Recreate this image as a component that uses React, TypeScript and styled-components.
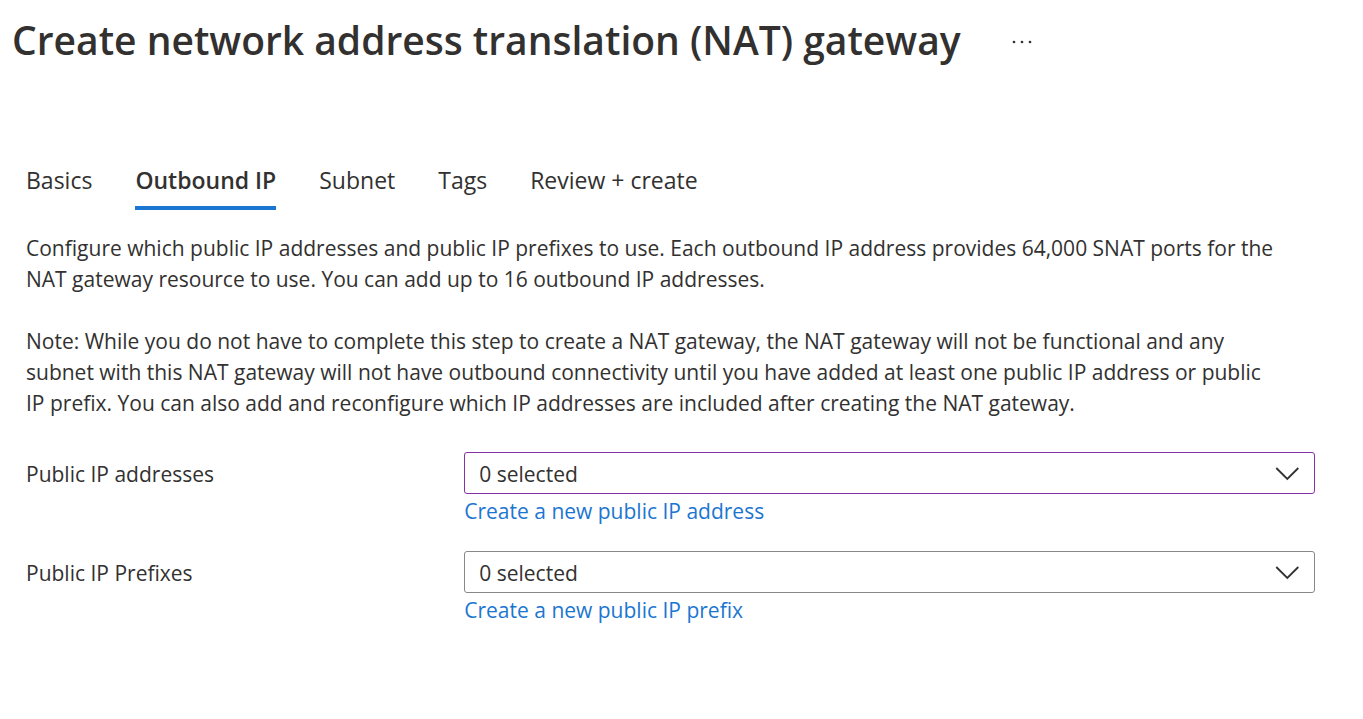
import React, { useState } from "react";
import styled, { createGlobalStyle } from "styled-components";

const GlobalStyle = createGlobalStyle`
  * {
    box-sizing: border-box;
  }
  body {
    margin: 0;
    background: #ffffff;
    color: #323130;
    font-family: "Segoe UI", "Open Sans", "Noto Sans", sans-serif;
    font-size: 21px;
    line-height: 31px;
  }
`;

const Page = styled.main`
  display: flex;
  flex-direction: column;
`;

const Header = styled.header`
  display: flex;
  align-items: center;
  gap: 46px;
  padding: 12px;
`;

const Title = styled.h1`
  margin: 0;
  font-size: 39px;
  line-height: 56px;
  font-weight: 600;
`;

const MoreButton = styled.button`
  display: flex;
  padding: 8px 4px 4px;
  border: 0;
  background: none;
  color: inherit;
  cursor: pointer;
`;

const Content = styled.div`
  display: flex;
  flex-direction: column;
  padding: 80px 48px 48px 26px;
`;

const TabList = styled.div`
  display: flex;
  flex-wrap: wrap;
  gap: 43px;
`;

const Tab = styled.button<{ $active: boolean }>`
  padding: 5px 0 10px;
  border: 0;
  border-bottom: 4px solid ${(p) => (p.$active ? "#1b76d1" : "transparent")};
  background: none;
  color: inherit;
  font: inherit;
  font-size: 23px;
  font-weight: ${(p) => (p.$active ? 600 : 400)};
  cursor: pointer;
`;

const Description = styled.p`
  margin: 0 0 31px;
  padding-right: 36px;
`;

const Panel = styled.section`
  padding-top: 23px;
`;

const Form = styled.form`
  display: flex;
  flex-direction: column;
  gap: 24px;
  padding-top: 2px;
`;

const Field = styled.div`
  display: grid;
  grid-template-columns: 34% 1fr;
`;

const Label = styled.label`
  padding-top: 7px;
`;

const Control = styled.div`
  display: flex;
  flex-direction: column;
  align-items: flex-start;
`;

const SelectBox = styled.div<{ $highlighted: boolean }>`
  display: grid;
  align-items: center;
  width: 100%;
  height: 42px;
  border: 1px solid ${(p) => (p.$highlighted ? "#8632a6" : "#8a8886")};
  border-radius: 3px;

  & > * {
    grid-area: 1 / 1;
  }
  & > svg {
    justify-self: end;
    margin-right: 14px;
    pointer-events: none;
  }
`;

const Select = styled.select`
  appearance: none;
  width: 100%;
  height: 40px;
  padding: 2px 48px 0 14px;
  border: 0;
  background: none;
  color: inherit;
  font: inherit;
  cursor: pointer;
`;

const CreateLink = styled.a`
  padding-top: 2px;
  color: #1b76d1;
  text-decoration: none;
`;

const Chevron = () => (
  <svg width="26" height="16" viewBox="0 0 26 16" fill="none" stroke="#323130" strokeWidth="1.8" aria-hidden="true">
    <path d="M2.3 3 13.3 14 24.3 3" />
  </svg>
);

const tabs = ["Basics", "Outbound IP", "Subnet", "Tags", "Review + create"];

const fields = [
  { id: "addresses", label: "Public IP addresses", link: "Create a new public IP address", highlighted: true },
  { id: "prefixes", label: "Public IP Prefixes", link: "Create a new public IP prefix", highlighted: false },
];

export default function App() {
  const [active, setActive] = useState("Outbound IP");
  return (
    <Page>
      <GlobalStyle />
      <Header>
        <Title>Create network address translation (NAT) gateway</Title>
        <MoreButton type="button" aria-label="More options">
          <svg width="22" height="6" viewBox="0 0 22 6" fill="currentColor" aria-hidden="true">
            <circle cx="3" cy="3" r="1.3" />
            <circle cx="11" cy="3" r="1.3" />
            <circle cx="19" cy="3" r="1.3" />
          </svg>
        </MoreButton>
      </Header>
      <Content>
        <TabList role="tablist">
          {tabs.map((tab) => (
            <Tab
              key={tab}
              type="button"
              role="tab"
              aria-selected={tab === active}
              $active={tab === active}
              onClick={() => setActive(tab)}
            >
              {tab}
            </Tab>
          ))}
        </TabList>
        <Panel role="tabpanel">
          <Description>
            Configure which public IP addresses and public IP prefixes to use. Each outbound IP address provides
            64,000 SNAT ports for the NAT gateway resource to use. You can add up to 16 outbound IP addresses.
          </Description>
          <Description>
            Note: While you do not have to complete this step to create a NAT gateway, the NAT gateway will not be
            functional and any subnet with this NAT gateway will not have outbound connectivity until you have added
            at least one public IP address or public IP prefix. You can also add and reconfigure which IP addresses
            are included after creating the NAT gateway.
          </Description>
          <Form>
            {fields.map((field) => (
              <Field key={field.id}>
                <Label htmlFor={field.id}>{field.label}</Label>
                <Control>
                  <SelectBox $highlighted={field.highlighted}>
                    <Select id={field.id}>
                      <option>0 selected</option>
                    </Select>
                    <Chevron />
                  </SelectBox>
                  <CreateLink href="#">{field.link}</CreateLink>
                </Control>
              </Field>
            ))}
          </Form>
        </Panel>
      </Content>
    </Page>
  );
}
